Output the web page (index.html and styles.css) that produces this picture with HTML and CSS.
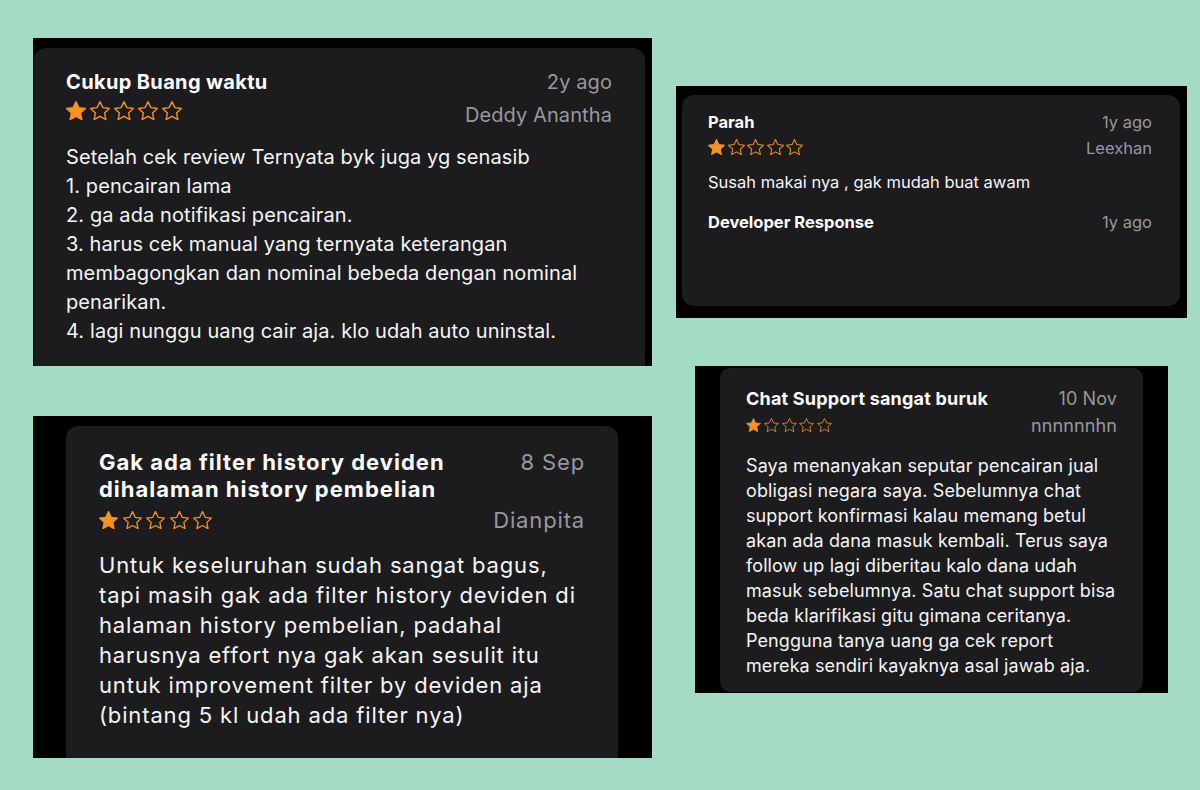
FILE: index.html
```html
<!DOCTYPE html>
<html lang="id">
  <head>
    <meta charset="utf-8">
    <meta name="viewport" content="width=device-width, initial-scale=1.0">
    <title>Ulasan pengguna</title>
    <link rel="stylesheet" href="styles.css">
  </head>
  <body>
    <svg class="defs" width="0" height="0" aria-hidden="true">
      <symbol id="star" viewBox="2 2 20 19">
        <path d="M12 2.6l2.85 6.05 6.6.8-4.9 4.55 1.3 6.55L12 17.3l-5.85 3.25 1.3-6.55-4.9-4.55 6.6-.8z"/>
      </symbol>
    </svg>

    <main class="collage">
      <div class="col col-left">

        <!-- ulasan 1 -->
        <div class="shot shot-buang">
          <article class="review">
            <div class="review-head">
              <h2 class="review-title">Cukup Buang waktu</h2>
              <span class="review-date">2y ago</span>
              <div class="stars">
                <svg class="star on"><use href="#star"/></svg>
                <svg class="star"><use href="#star"/></svg>
                <svg class="star"><use href="#star"/></svg>
                <svg class="star"><use href="#star"/></svg>
                <svg class="star"><use href="#star"/></svg>
              </div>
              <span class="review-author">Deddy Anantha</span>
            </div>
            <p class="review-body">
              Setelah cek review Ternyata byk juga yg senasib<br>
              1. pencairan lama<br>
              2. ga ada notifikasi pencairan.<br>
              3. harus cek manual yang ternyata keterangan membagongkan dan nominal bebeda dengan nominal penarikan.<br>
              4. lagi nunggu uang cair aja. klo udah auto uninstal.
            </p>
          </article>
        </div>

        <!-- ulasan 3 -->
        <div class="shot shot-filter">
          <article class="review">
            <div class="review-head">
              <h2 class="review-title">Gak ada filter history deviden dihalaman history pembelian</h2>
              <span class="review-date">8 Sep</span>
              <div class="stars">
                <svg class="star on"><use href="#star"/></svg>
                <svg class="star"><use href="#star"/></svg>
                <svg class="star"><use href="#star"/></svg>
                <svg class="star"><use href="#star"/></svg>
                <svg class="star"><use href="#star"/></svg>
              </div>
              <span class="review-author">Dianpita</span>
            </div>
            <p class="review-body">
              Untuk keseluruhan sudah sangat bagus, tapi masih gak ada filter history deviden di halaman history pembelian, padahal harusnya effort nya gak akan sesulit itu untuk improvement filter by deviden aja (bintang 5 kl udah ada filter nya)
            </p>
          </article>
        </div>
      </div>

      <div class="col col-right">

        <!-- ulasan 2 -->
        <div class="shot shot-parah">
          <article class="review">
            <div class="review-head">
              <h2 class="review-title">Parah</h2>
              <span class="review-date">1y ago</span>
              <div class="stars">
                <svg class="star on"><use href="#star"/></svg>
                <svg class="star"><use href="#star"/></svg>
                <svg class="star"><use href="#star"/></svg>
                <svg class="star"><use href="#star"/></svg>
                <svg class="star"><use href="#star"/></svg>
              </div>
              <span class="review-author">Leexhan</span>
            </div>
            <p class="review-body">Susah makai nya , gak mudah buat awam</p>
            <div class="dev-response">
              <h3 class="review-title">Developer Response</h3>
              <span class="review-date">1y ago</span>
            </div>
          </article>
        </div>

        <!-- ulasan 4 -->
        <div class="shot shot-chat">
          <article class="review">
            <div class="review-head">
              <h2 class="review-title">Chat Support sangat buruk</h2>
              <span class="review-date">10 Nov</span>
              <div class="stars">
                <svg class="star on"><use href="#star"/></svg>
                <svg class="star"><use href="#star"/></svg>
                <svg class="star"><use href="#star"/></svg>
                <svg class="star"><use href="#star"/></svg>
                <svg class="star"><use href="#star"/></svg>
              </div>
              <span class="review-author">nnnnnnhn</span>
            </div>
            <p class="review-body">
              Saya menanyakan seputar pencairan jual obligasi negara saya. Sebelumnya chat support konfirmasi kalau memang betul akan ada dana masuk kembali. Terus saya follow up lagi diberitau kalo dana udah masuk sebelumnya. Satu chat support bisa beda klarifikasi gitu gimana ceritanya. Pengguna tanya uang ga cek report mereka sendiri kayaknya asal jawab aja.
            </p>
          </article>
        </div>
      </div>
    </main>
  </body>
</html>
```

FILE: styles.css
```css
body {
  margin: 0;
  padding: 0;
  background-color: #a4dbc3;
  font-family: 'Inter', 'Liberation Sans', sans-serif;
  color: #f4f4f5;
  height: 790px;
  overflow: hidden;
}

.defs {
  position: absolute;
}

.collage {
  display: flex;
  align-items: flex-start;
}

.col {
  display: flex;
  flex-direction: column;
  align-items: flex-start;
}

.col-left {
  padding: 38px 0 0 33px;
  gap: 50px;
}

.col-right {
  padding-top: 86px;
  margin-left: 24px;
  gap: 48px;
}

/* black screenshot frame */
.shot {
  background-color: #000;
  display: flex;
  flex-direction: column;
  overflow: hidden;
  box-sizing: border-box;
}

.review {
  background-color: #1c1c1e;
  border-radius: 12px 12px 0 0;
  flex: 1;
}

.review-head {
  display: grid;
  grid-template-columns: 1fr auto;
  column-gap: 16px;
  align-items: start;
}

.review-title {
  margin: 0;
  font-weight: 700;
  color: #fff;
}

.review-date,
.review-author {
  color: #98989e;
  text-align: right;
  justify-self: end;
}

.stars {
  display: flex;
  color: #f7921e;
}

.star {
  fill: none;
  stroke: currentColor;
  stroke-width: 1.4;
  stroke-linejoin: round;
}

.star use {
  vector-effect: non-scaling-stroke;
}

.star.on {
  fill: currentColor;
}

.review-body {
  margin: 0;
}

/* --- ulasan 1 --- */
.shot-buang {
  width: 619px;
  height: 328px;
  padding: 10px 7px 0 1px;
}

.shot-buang .review {
  padding: 21px 33px 0 32px;
  letter-spacing: 0.1px;
}

.shot-buang .review-head {
  font-size: 20px;
  line-height: 26px;
}

.shot-buang .review-title {
  font-size: 20px;
  letter-spacing: 0.35px;
}

.shot-buang .stars {
  gap: 4px;
  margin-top: 6px;
}

.shot-buang .star {
  width: 20px;
  height: 19px;
}

.shot-buang .review-author {
  margin-top: 7px;
}

.shot-buang .review-body {
  font-size: 20px;
  line-height: 29px;
  margin-top: 15px;
}

/* --- ulasan 3 --- */
.shot-filter {
  width: 619px;
  height: 342px;
  padding: 10px 34px 0 33px;
}

.shot-filter .review {
  padding: 23px 33px 0 33px;
  letter-spacing: 0.85px;
}

.shot-filter .review-head {
  font-size: 22px;
  line-height: 27px;
  column-gap: 40px;
}

.shot-filter .review-title {
  font-size: 22px;
  letter-spacing: 1px;
}

.shot-filter .stars {
  gap: 4.5px;
  margin-top: 8px;
}

.shot-filter .star {
  width: 19px;
  height: 18px;
}

.shot-filter .review-author {
  margin-top: 4px;
}

.shot-filter .review-body {
  font-size: 22px;
  line-height: 30px;
  margin-top: 16px;
}

/* --- ulasan 2 --- */
.shot-parah {
  width: 511px;
  height: 232px;
  padding: 9px 7px 12px 6px;
}

.shot-parah .review {
  border-radius: 12px;
  padding: 17px 28px 0 26px;
  font-size: 16.5px;
}

.shot-parah .review-head {
  line-height: 20px;
}

.shot-parah .review-title {
  font-size: 16.5px;
}

.shot-parah .stars {
  gap: 2.5px;
  margin-top: 7px;
}

.shot-parah .star {
  width: 17px;
  height: 16px;
  stroke-width: 1.2;
}

.shot-parah .review-author {
  margin-top: 6px;
}

.shot-parah .review-body {
  line-height: 22px;
  margin-top: 13px;
}

.dev-response {
  display: flex;
  justify-content: space-between;
  line-height: 22px;
  margin-top: 18px;
}

/* --- ulasan 4 --- */
.shot-chat {
  width: 473px;
  height: 327px;
  padding: 2px 25px 1px 25px;
  margin-left: 19px;
}

.shot-chat .review {
  border-radius: 10px;
  padding: 20px 26px 0 26px;
  letter-spacing: 0.1px;
}

.shot-chat .review-head {
  font-size: 18px;
  line-height: 22px;
}

.shot-chat .review-title {
  font-size: 18px;
  letter-spacing: 0.2px;
}

.shot-chat .stars {
  gap: 2.75px;
  margin-top: 8px;
}

.shot-chat .star {
  width: 15px;
  height: 14px;
  stroke-width: 1.1;
}

.shot-chat .review-author {
  margin-top: 5px;
}

.shot-chat .review-body {
  font-size: 18px;
  line-height: 25px;
  margin-top: 15.5px;
}
```
